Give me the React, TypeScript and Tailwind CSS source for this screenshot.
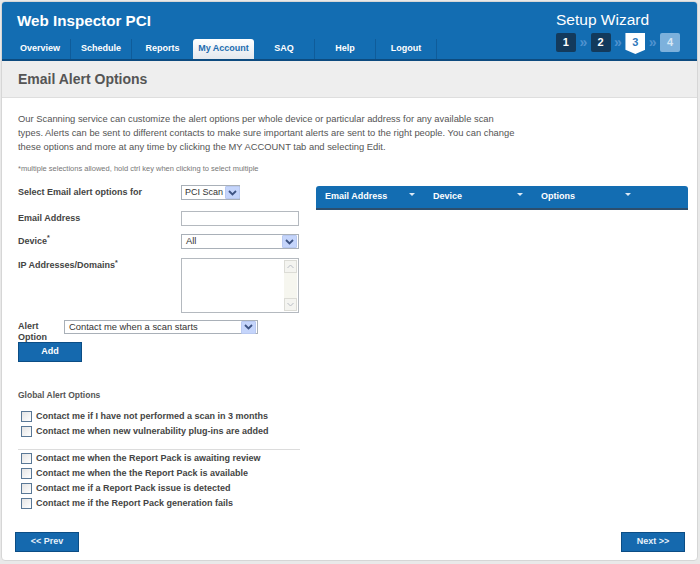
import React from 'react';

const tabs = ['Overview', 'Schedule', 'Reports', 'My Account', 'SAQ', 'Help', 'Logout'];

function Arrow() {
  return (
    <span className="flex h-[13px] w-[15px] shrink-0 items-center justify-center rounded-[1px] border border-[#b9c9f1] bg-[#c5d5fb]">
      <svg width="9" height="6" viewBox="0 0 9 6">
        <path d="M1 1 L4.5 4.5 L8 1" fill="none" stroke="#3d5383" strokeWidth="1.8" />
      </svg>
    </span>
  );
}

function Select({ value, className }: { value: string; className: string }) {
  return (
    <div className={`flex items-center justify-between gap-[2px] whitespace-nowrap border border-[#a9b0b8] bg-white pl-[4px] pr-[1px] font-normal text-[#333] ${className}`}>
      <span>{value}</span>
      <Arrow />
    </div>
  );
}

function Check({ label }: { label: string }) {
  return (
    <div className="flex h-[15px] items-center gap-[4px]">
      <span className="ml-[3px] h-[11px] w-[11px] border border-[#5a7896] bg-gradient-to-br from-[#e4e4e4] to-white" />
      <span className="text-[9px] font-bold text-[#444]">{label}</span>
    </div>
  );
}

function SortCol({ label, last }: { label: string; last?: boolean }) {
  return (
    <div className={`flex items-center pl-[9px] ${last ? 'flex-1' : 'w-[108px]'}`}>
      <span className="w-[84px]">{label}</span>
      <svg width="6" height="4" viewBox="0 0 6 4" className="mb-[4px]">
        <path d="M0 0 H6 L3 3 Z" fill="#dce9f5" />
      </svg>
    </div>
  );
}

export default function App() {
  return (
    <div className="h-[564px] w-[700px] bg-[#e9e9e9] p-[1px] pr-[2px] pb-[3px] font-['Liberation_Sans',Arial,sans-serif]">
      <div className="flex h-full flex-col overflow-hidden rounded-[4px] border border-[#d6d6d6] bg-white">
        {/* header */}
        <div className="flex h-[59px] justify-between border-b-2 border-[#0d4b7f] bg-[#136db2]">
          <div className="flex flex-col">
            <div className="pl-[15px] pt-[10px] text-[15.2px] font-bold leading-[18px] text-white">Web Inspector PCI</div>
            <div className="mt-auto ml-[8px] flex h-[20px]">
              {tabs.map((t, i) => (
                <div
                  key={t}
                  className={
                    t === 'My Account'
                      ? 'flex w-[61px] items-center justify-center rounded-t-[3px] bg-gradient-to-b from-white to-[#e3e8ee] text-[9px] font-bold text-[#1d6db0]'
                      : `flex w-[61px] items-center justify-center text-[9px] font-bold text-white ${i === 2 ? '' : 'border-r border-[#0f5c9a]'}`
                  }
                >
                  {t}
                </div>
              ))}
            </div>
          </div>
          <div className="flex w-[141px] flex-col pr-[17px] pt-[8px]">
            <div className="text-[15.5px] leading-[19px] text-white">Setup Wizard</div>
            <div className="mt-[4px] flex items-start text-[11px] font-bold">
              <span className="flex h-[19px] w-[20px] items-center justify-center rounded-[2px] bg-[#133a5c] text-white">1</span>
              <span className="flex h-[19px] w-[15px] items-center justify-center text-[14px] text-[#4f92cf]">»</span>
              <span className="flex h-[19px] w-[20px] items-center justify-center rounded-[2px] bg-[#133a5c] text-white">2</span>
              <span className="flex h-[19px] w-[15px] items-center justify-center text-[14px] text-[#4f92cf]">»</span>
              <span className="flex h-[21px] w-[20px] items-center justify-center bg-white pb-[2px] text-[#2f78bb] [clip-path:polygon(0_0,100%_0,100%_80%,50%_100%,0_80%)]">3</span>
              <span className="flex h-[19px] w-[15px] items-center justify-center text-[14px] text-[#4f92cf]">»</span>
              <span className="flex h-[19px] w-[20px] items-center justify-center rounded-[2px] bg-[#7db1dc] text-[#d8e8f6]">4</span>
            </div>
          </div>
        </div>

        {/* sub header */}
        <div className="flex h-[37px] items-center border-b border-[#dedede] bg-[#eeeeee] pl-[16px] text-[14px] font-bold text-[#555]">
          Email Alert Options
        </div>

        {/* body */}
        <div className="flex flex-1 flex-col px-[16px] pb-[8px]">
          <p className="mt-[14px] text-[9.4px] leading-[14px] text-[#555]">
            Our Scanning service can customize the alert options per whole device or particular address for any available scan
            <br />
            types. Alerts can be sent to different contacts to make sure important alerts are sent to the right people. You can change
            <br />
            these options and more at any time by clicking the MY ACCOUNT tab and selecting Edit.
          </p>
          <p className="mt-[9px] text-[7.5px] leading-[12px] text-[#777]">
            *multiple selections allowed, hold ctrl key when clicking to select multiple
          </p>

          <div className="mt-[10px] flex">
            {/* left form */}
            <div className="w-[282px] text-[9px] font-bold text-[#444]">
              <div className="flex h-[15px] items-center">
                <span className="w-[163px]">Select Email alert options for</span>
                <Select value="PCI Scan" className="h-[15px] w-[59px] !pl-[3px] text-[9px]" />
              </div>
              <div className="mt-[11px] flex h-[15px] items-center">
                <span className="w-[163px]">Email Address</span>
                <div className="h-[15px] w-[118px] border border-[#b4b9bf] bg-white" />
              </div>
              <div className="mt-[8px] flex h-[15px] items-center">
                <span className="w-[163px]">
                  Device<sup className="text-[7px]">*</sup>
                </span>
                <Select value="All" className="h-[15px] w-[118px] text-[9.4px]" />
              </div>
              <div className="mt-[9px] flex">
                <span className="mt-[1px] w-[163px]">
                  IP Addresses/Domains<sup className="text-[7px]">*</sup>
                </span>
                <div className="flex h-[55px] w-[118px] justify-end border border-[#b4b9bf] bg-white p-[1px]">
                  <div className="flex w-[13px] flex-col justify-between bg-[#f6f6ef]">
                    <span className="flex h-[13px] items-center justify-center border border-[#dcdcd6] bg-[#f4f4f0]">
                      <svg width="7" height="5" viewBox="0 0 7 5"><path d="M0.5 4 L3.5 1 L6.5 4" fill="none" stroke="#b8bcc4" strokeWidth="1" /></svg>
                    </span>
                    <span className="flex h-[13px] items-center justify-center border border-[#dcdcd6] bg-[#f4f4f0]">
                      <svg width="7" height="5" viewBox="0 0 7 5"><path d="M0.5 1 L3.5 4 L6.5 1" fill="none" stroke="#b8bcc4" strokeWidth="1" /></svg>
                    </span>
                  </div>
                </div>
              </div>
              <div className="mt-[7px] flex items-start">
                <span className="w-[46px] pt-[1px] leading-[11px]">
                  Alert
                  <br />
                  Option
                </span>
                <Select value="Contact me when a scan starts" className="h-[14px] w-[194px] text-[9.4px]" />
              </div>
              <button className="mt-[-1px] block h-[20px] w-[64px] border border-[#0b4d85] bg-[#1569ae] text-[9px] font-bold text-white">
                Add
              </button>

              <div className="mt-[27px] text-[8.5px] font-bold text-[#555]">Global Alert Options</div>
              <div className="mt-[7px]">
                <Check label="Contact me if I have not performed a scan in 3 months" />
                <Check label="Contact me when new vulnerability plug-ins are added" />
              </div>
              <div className="mt-[10px] mb-[1px] h-px bg-[#dcdcdc]" />
              <Check label="Contact me when the Report Pack is awaiting review" />
              <Check label="Contact me when the the Report Pack is available" />
              <Check label="Contact me if a Report Pack issue is detected" />
              <Check label="Contact me if the Report Pack generation fails" />
            </div>

            {/* right table */}
            <div className="ml-[16px] mr-[-7px] flex-1 pt-[1px]">
              <div className="flex h-[24px] rounded-t-[3px] border-b-2 border-[#2c4e6e] bg-[#136db2] text-[9px] font-bold text-white">
                <SortCol label="Email Address" />
                <SortCol label="Device" />
                <SortCol label="Options" last />
              </div>
            </div>
          </div>

          <div className="mt-auto flex justify-between">
            <button className="ml-[-3px] h-[20px] w-[64px] border border-[#0b4d85] bg-[#1569ae] text-[9px] font-bold text-[#e6f0fa]">
              &lt;&lt; Prev
            </button>
            <button className="mr-[-4px] h-[20px] w-[64px] border border-[#0b4d85] bg-[#1569ae] text-[9px] font-bold text-[#e6f0fa]">
              Next &gt;&gt;
            </button>
          </div>
        </div>
      </div>
    </div>
  );
}
